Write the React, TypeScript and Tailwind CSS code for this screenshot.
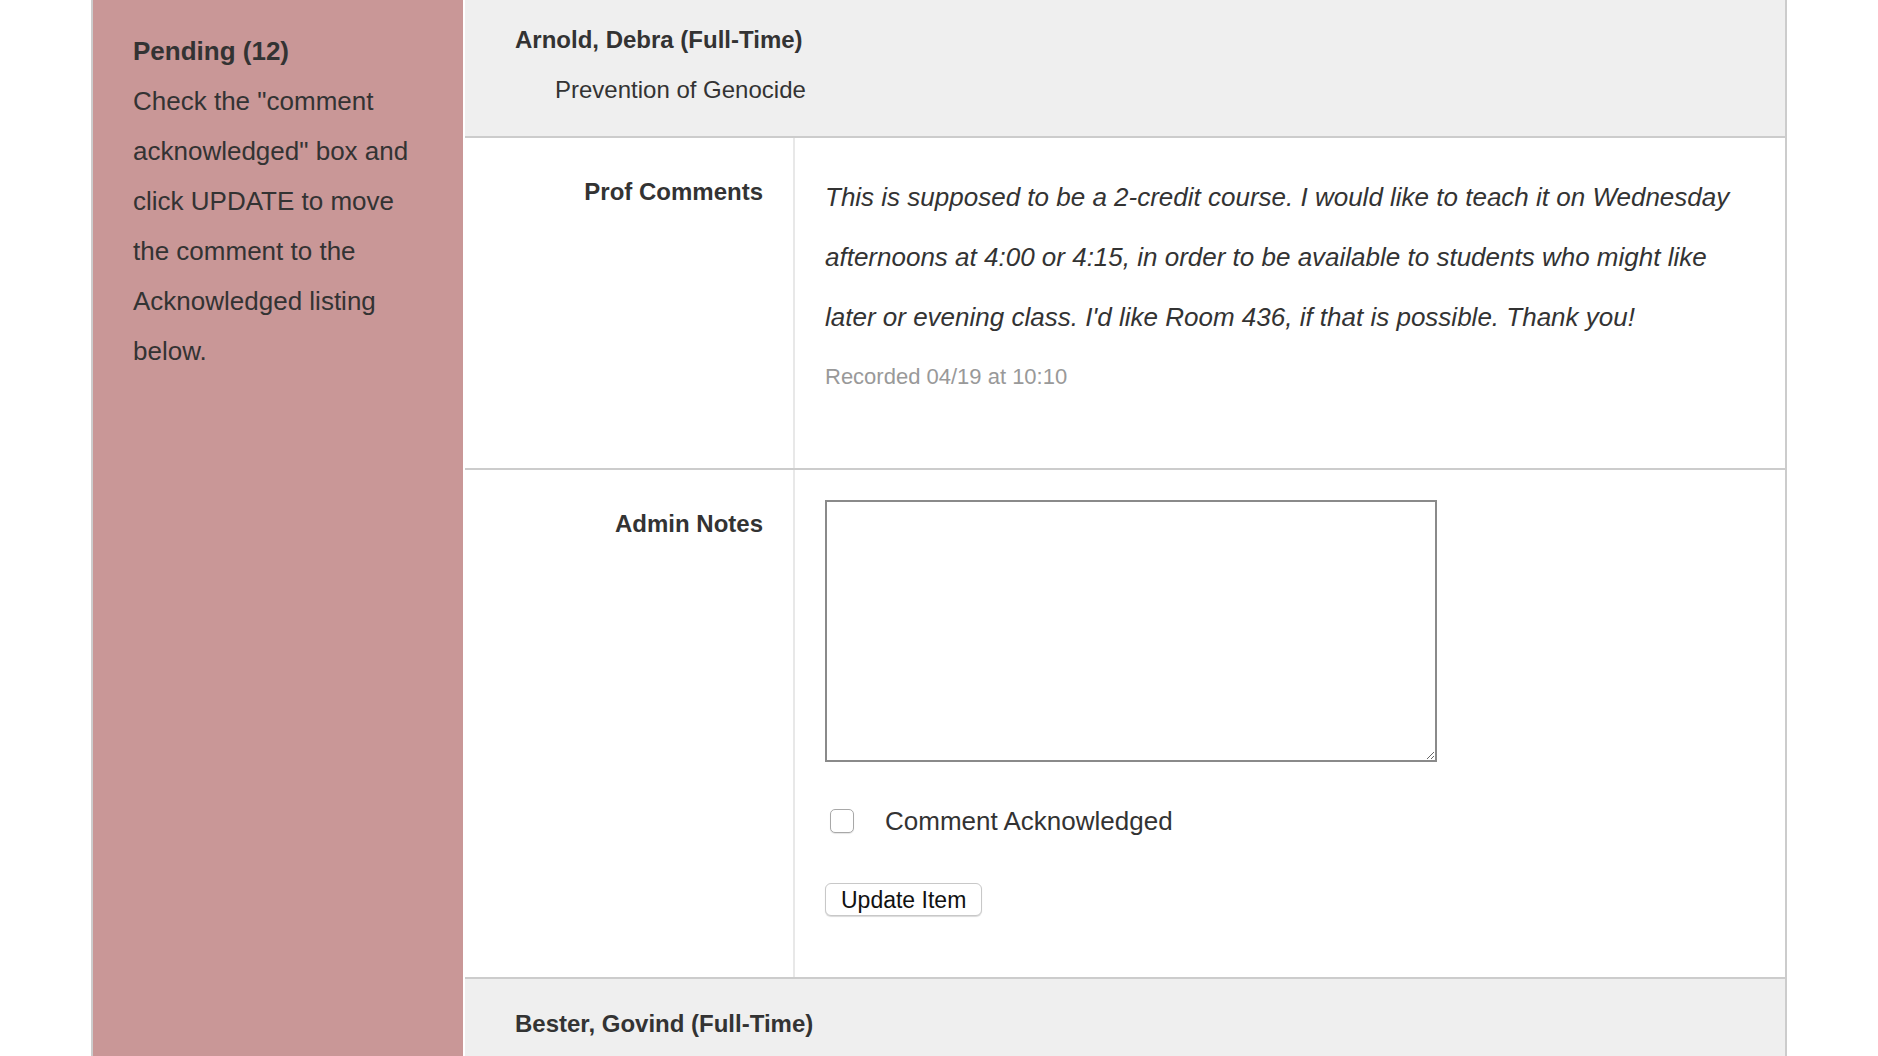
import React from "react";

function Header({ name, course, top }: { name: string; course?: string; top: string }) {
  return (
    <div className={`bg-[#efefef] border-b-2 border-[#cccccc] pl-[50px] ${top} pb-[32px]`}>
      <div className="text-[24px] leading-[28px] font-bold text-[#333333]">{name}</div>
      {course && (
        <div className="mt-[22px] pl-[40px] text-[24px] leading-[28px] text-[#333333]">{course}</div>
      )}
    </div>
  );
}

function Row({ label, children }: { label: string; children: React.ReactNode }) {
  return (
    <div className="flex border-b-2 border-[#cccccc]">
      <div className="w-[330px] shrink-0 border-r-2 border-[#e8e8e8] pt-[40px] pr-[30px] text-right text-[24px] leading-[28px] font-bold text-[#333333]">
        {label}
      </div>
      <div className="flex-1 min-w-0 pl-[30px] pr-[32px]">{children}</div>
    </div>
  );
}

export default function App() {
  return (
    <div className="w-full h-[1056px] overflow-hidden bg-white font-['Liberation_Sans',Arial,Helvetica,sans-serif] text-[#333333]">
      <div className="ml-[91px] w-[1696px] h-[1056px] flex border-l-2 border-r-2 border-[#cccccc]">
        <aside className="w-[372px] shrink-0 bg-[#c99797] border-r-2 border-white pl-[40px] pr-[42px] pt-[27px]">
          <div className="text-[26px] leading-[49px] font-bold">Pending (12)</div>
          <p className="text-[26px] leading-[50px]">
            Check the "comment acknowledged" box and click UPDATE to move the comment to the Acknowledged listing below.
          </p>
        </aside>
        <main className="flex-1 min-w-0">
          <Header name="Arnold, Debra (Full-Time)" course="Prevention of Genocide" top="pt-[26px]" />
          <Row label="Prof Comments">
            <div className="pt-[29px] pb-[76px]">
              <p className="text-[26px] leading-[60px] italic">
                This is supposed to be a 2-credit course. I would like to teach it on Wednesday afternoons at 4:00 or 4:15, in order to be available to students who might like later or evening class. I'd like Room 436, if that is possible. Thank you!
              </p>
              <div className="mt-[15px] text-[22px] leading-[30px] text-[#999999]">Recorded 04/19 at 10:10</div>
            </div>
          </Row>
          <Row label="Admin Notes">
            <div className="pt-[30px] pb-[61px]">
              <textarea className="block w-[612px] h-[262px] border-2 border-[#8a8a8a] bg-white resize outline-none" />
              <label className="mt-[44px] flex items-center">
                <input
                  type="checkbox"
                  className="ml-[5px] appearance-none w-[24px] h-[24px] rounded-[5px] border border-[#a8a8a8] bg-white shadow-[0_1px_1px_rgba(0,0,0,0.1)]"
                />
                <span className="ml-[31px] text-[26px] leading-[30px] text-[#333333]">Comment Acknowledged</span>
              </label>
              <button className="mt-[47px] h-[33px] px-[15px] rounded-[6px] border border-[#c8c8c8] bg-white text-[23px] leading-[30px] text-[#111111] shadow-[0_1px_1px_rgba(0,0,0,0.15)]">
                Update Item
              </button>
            </div>
          </Row>
          <Header name="Bester, Govind (Full-Time)" top="pt-[31px]" />
        </main>
      </div>
    </div>
  );
}
